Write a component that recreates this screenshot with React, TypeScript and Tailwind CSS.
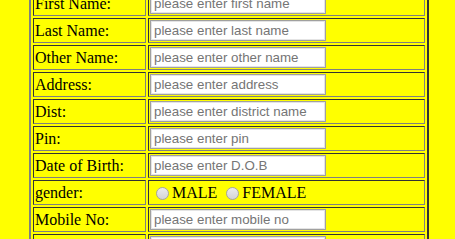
const rows: { label: string; placeholder?: string; radio?: boolean }[] = [
  { label: "First Name:", placeholder: "please enter first name" },
  { label: "Last Name:", placeholder: "please enter last name" },
  { label: "Other Name:", placeholder: "please enter other name" },
  { label: "Address:", placeholder: "please enter address" },
  { label: "Dist:", placeholder: "please enter district name" },
  { label: "Pin:", placeholder: "please enter pin" },
  { label: "Date of Birth:", placeholder: "please enter D.O.B" },
  { label: "gender:", radio: true },
  { label: "Mobile No:", placeholder: "please enter mobile no" },
  { label: "Email:", placeholder: "please enter email" },
];

function Radio({ name }: { name: string }) {
  return (
    <label className="flex items-center">
      <input type="radio" name={name} className="sr-only" />
      <span className="h-[13px] w-[13px] rounded-full border border-[#a3a3a3] bg-gradient-to-b from-[#ececec] to-[#d4d4d4]" />
    </label>
  );
}

export default function App() {
  return (
    <main className="min-h-screen overflow-hidden bg-[#ffff00] font-['Liberation_Serif',serif] text-[16px] text-black">
      <form className="-mt-[13px] ml-[29px] w-[400px] border-2 border-t-[#808080] border-l-[#808080] border-r-[#333] border-b-[#333]">
        <div className="grid grid-cols-[113px_1fr] gap-[2px] p-[2px]">
          {rows.map((row) => (
            <div key={row.label} className="contents">
              <div className="flex h-[25px] items-center border border-t-[#333] border-l-[#333] border-r-[#808080] border-b-[#808080] px-[1px]">
                {row.label}
              </div>
              <div className="flex h-[25px] items-center border border-t-[#333] border-l-[#333] border-r-[#808080] border-b-[#808080] px-[1px]">
                {row.radio ? (
                  <div className="flex items-center pt-[1px]">
                    <span className="ml-[6px] mr-[3px]">
                      <Radio name="gender" />
                    </span>
                    <span>MALE</span>
                    <span className="ml-[9px] mr-[3px]">
                      <Radio name="gender" />
                    </span>
                    <span>FEMALE</span>
                  </div>
                ) : (
                  <input
                    placeholder={row.placeholder}
                    className="h-[21px] w-[176px] border border-[#a0a0a0] bg-white px-[3px] font-['Liberation_Sans',sans-serif] text-[13.333px] shadow-[inset_0_0_0_1px_#e4e4e4] outline-none placeholder:text-[#757575]"
                  />
                )}
              </div>
            </div>
          ))}
        </div>
      </form>
    </main>
  );
}
